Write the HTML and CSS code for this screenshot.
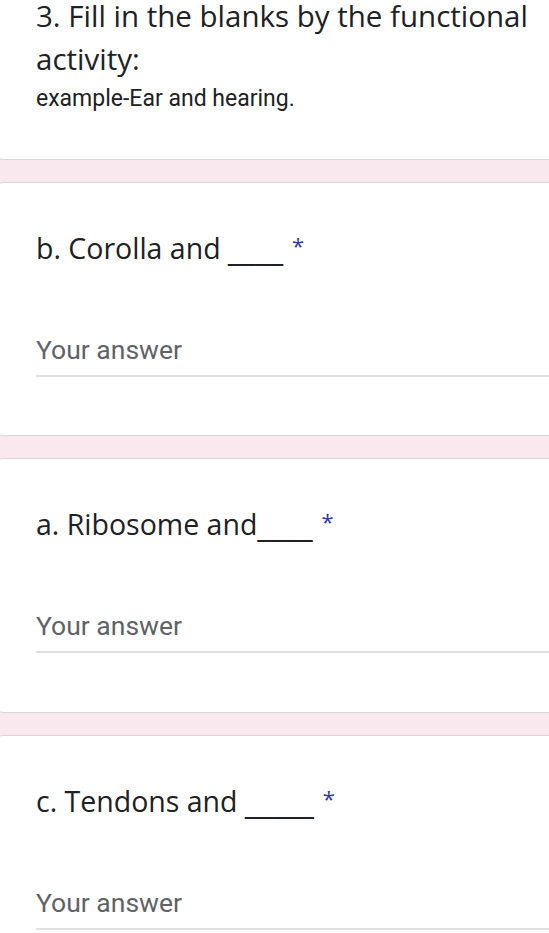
FILE: index.html
```html
<!DOCTYPE html>
<html lang="en">
<head>
<meta charset="utf-8">
<title>Form</title>
<link rel="stylesheet" href="styles.css">
</head>
<body>
<div class="form">
  <div class="card header">
    <div class="title">3. Fill in the blanks by the functional activity:</div>
    <div class="desc">example-Ear and hearing.</div>
  </div>
  <div class="card question">
    <div class="qtitle">b. Corolla and <span class="blank">____</span><span class="req">*</span></div>
    <div class="answer">Your answer</div>
  </div>
  <div class="card question">
    <div class="qtitle">a. Ribosome and<span class="blank">____</span><span class="req">*</span></div>
    <div class="answer">Your answer</div>
  </div>
  <div class="card question">
    <div class="qtitle">c. Tendons and <span class="blank">_____</span><span class="req">*</span></div>
    <div class="answer">Your answer</div>
  </div>
</div>
</body>
</html>
```

FILE: styles.css
```css
html, body {
  margin: 0;
  padding: 0;
  background: #ffffff;
}
body {
  width: 549px;
  height: 933px;
  overflow: hidden;
}
.form {
  display: flex;
  flex-direction: column;
  gap: 22px;
  background: #f9e8ee;
  margin: 0 -20px 0 -5px;
}
.card {
  background: #ffffff;
  border: 1px solid #dcd6d9;
  border-radius: 8px;
  padding-left: 40px;
}
.header {
  border-top: none;
  border-radius: 0 0 8px 8px;
  padding-bottom: 47px;
}
.title {
  font-family: "Open Sans", sans-serif;
  font-weight: 500;
  font-size: 29.5px;
  line-height: 43px;
  color: #202124;
  width: 520px;
  margin-top: -6px;
}
.desc {
  font-family: Roboto, sans-serif;
  font-size: 23px;
  line-height: 26px;
  color: #202124;
  margin-top: 6px;
}
.question {
  padding-top: 47px;
  padding-bottom: 58px;
}
.question + .question {
  padding-bottom: 59px;
}
.qtitle {
  font-family: "Open Sans", sans-serif;
  font-size: 28.5px;
  line-height: 36px;
  color: #202124;
}
.blank {
  font-family: "DejaVu Sans", sans-serif;
  font-size: 27.5px;
}
.req {
  color: #2d3aa6;
  font-size: 22px;
  vertical-align: top;
  line-height: 30px;
  padding-left: 9px;
}
.answer {
  margin-top: 68px;
  font-family: Roboto, sans-serif;
  font-size: 26.5px;
  line-height: 30px;
  color: #5f6368;
  padding-bottom: 10px;
  border-bottom: 2px solid #e0e0e0;
}
```
